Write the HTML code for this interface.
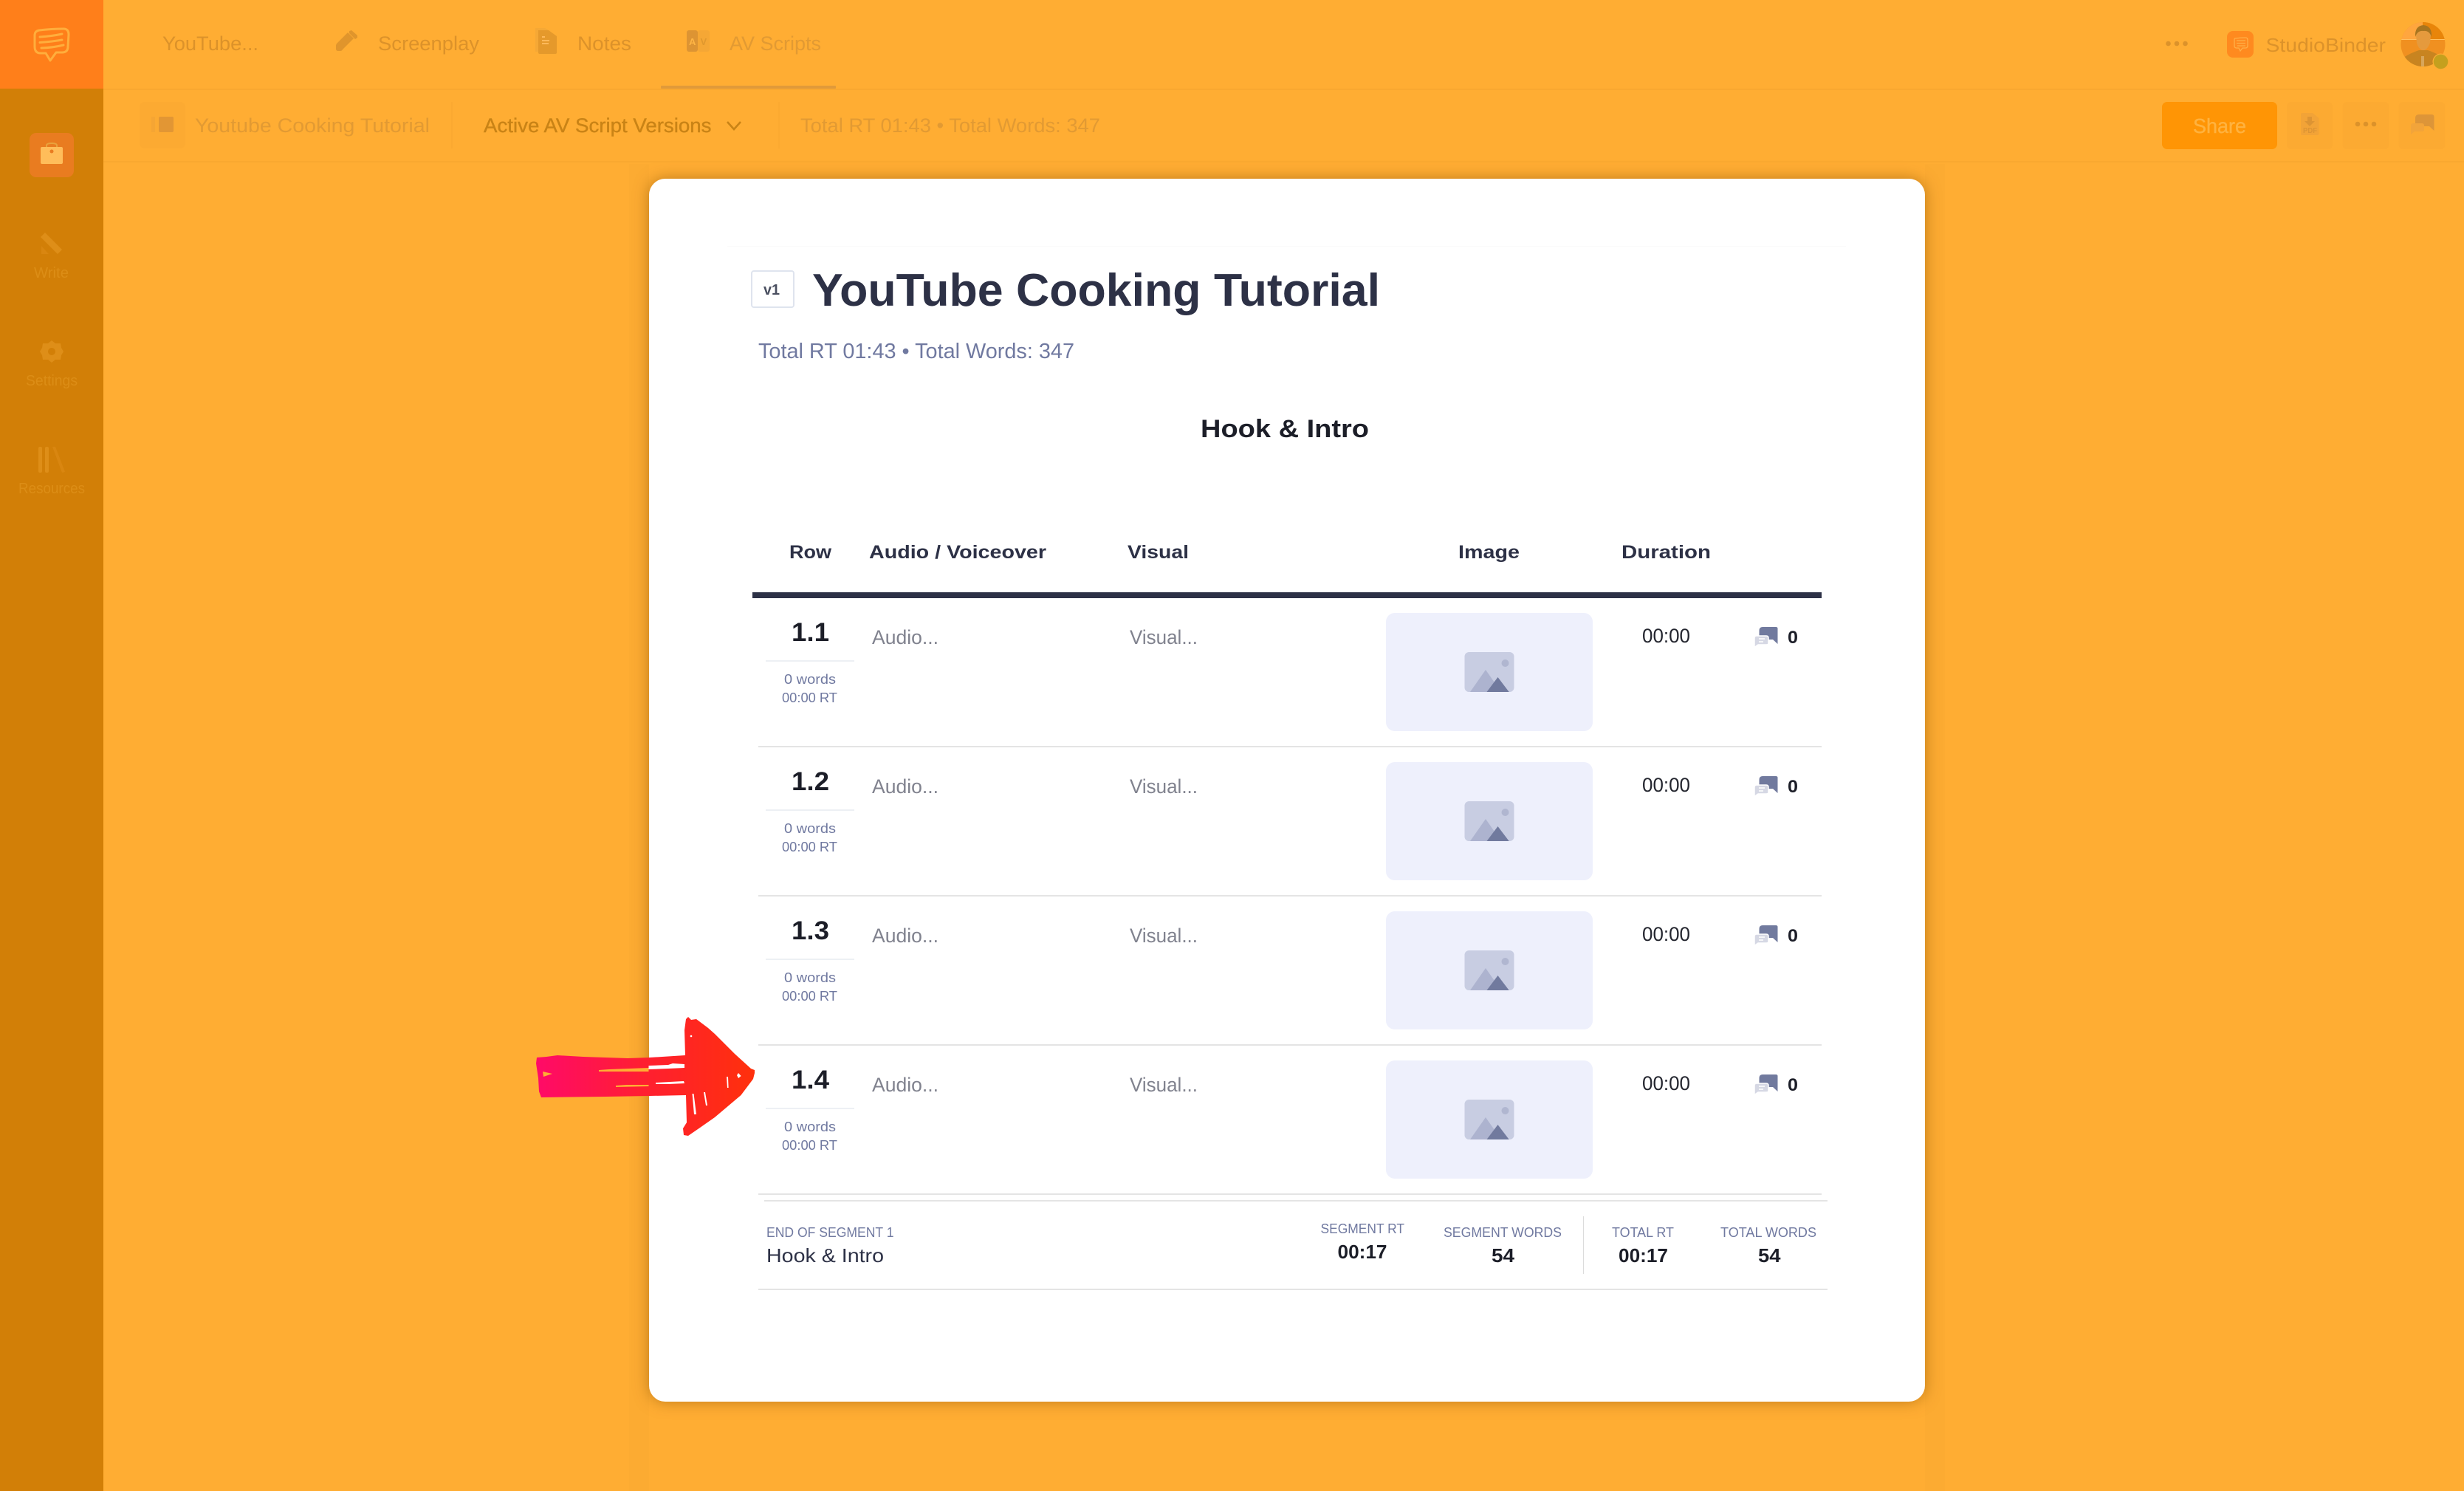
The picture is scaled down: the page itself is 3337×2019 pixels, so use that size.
<!DOCTYPE html>
<html lang="en"><head><meta charset="utf-8"><title>YouTube Cooking Tutorial</title>
<style>
html,body{margin:0;padding:0;width:3337px;height:2019px;overflow:hidden;background:#ffad33}
.side{position:absolute;left:0;top:0;width:140px;height:2019px;background:#d27f07}
.logo{position:absolute;left:0;top:0;width:140px;height:120px;background:#ff7f1a}
.strip{position:absolute;top:222px;bottom:0;left:852px;width:1782px;background:#fcab32}
.card{position:absolute;left:879px;top:242px;width:1728px;height:1656px;background:#fff;border-radius:22px;box-shadow:0 0 20px rgba(130,75,0,.5)}
.under{position:absolute;left:879px;top:222px;bottom:0;width:1728px;background:#ffad33}
svg{position:absolute;left:0;top:0}
text{font-family:"Liberation Sans",sans-serif}
</style></head><body>
<div class="side"></div><div class="logo"></div><div class="strip"></div><div class="under"></div><div class="card"></div>
<svg width="3337" height="2019" viewBox="0 0 3337 2019" xmlns="http://www.w3.org/2000/svg">
<defs>
<linearGradient id="ar" gradientUnits="userSpaceOnUse" x1="726" y1="0" x2="1021" y2="0"><stop offset="0" stop-color="#ff0a68"/><stop offset=".5" stop-color="#ff1f30"/><stop offset="1" stop-color="#ff300c"/></linearGradient>
<clipPath id="av"><circle cx="3281.5" cy="60" r="30"/></clipPath>
</defs>
<!-- header lines -->
<rect x="140" y="120" width="3197" height="2" fill="#f9a830"/>
<rect x="140" y="218" width="3197" height="2" fill="#f9a830"/>
<rect x="895" y="116" width="237" height="4" rx="1" fill="#e09a3a"/>
<!-- logo -->
<path d="M53 41 Q70 39 86 39 Q93 39 93 47 L92 63 Q92 71 84 71 L76 71 L68 82 L62 72 L55 72 Q47 72 47 63 L47 48 Q47 42 53 41Z" fill="none" stroke="#ffae3c" stroke-width="3" stroke-linejoin="round"/>
<path d="M54 50 Q70 49 84 46M54 57.500 Q70 56.500 84 54M56 65 Q72 64.500 86 61" fill="none" stroke="#ffae3c" stroke-width="3" stroke-linecap="round"/>
<!-- side nav -->
<rect x="40" y="180" width="60" height="60" rx="9" fill="#e97c20"/>
<path d="M55 201 Q55 199 57 199 H83 Q85 199 85 201 L85 220 Q85 222 83 222 H57 Q55 222 55 220Z" fill="#ffbd5a"/>
<path d="M63 199 V197 Q63 194 70 194 Q77 194 77 197 V199" fill="none" stroke="#e9a33d" stroke-width="2"/>
<circle cx="70" cy="205" r="2.500" fill="#e97c20"/>
<path d="M55 321 L61 315 L84 338 L78 344Z" fill="#de8e18"/>
<path d="M56 333 L66 344 H56Z" fill="#d98610"/>
<text x="46" y="376" font-size="20" fill="#dc8d16" textLength="47" lengthAdjust="spacingAndGlyphs">Write</text>
<path d="M70 461 L75 465 L82 465 L83 471 L86 476 L83 481 L82 487 L75 487 L70 491 L65 487 L58 487 L57 481 L54 476 L57 471 L58 465 L65 465Z" fill="#de8e18"/>
<circle cx="70" cy="476" r="5" fill="#d27f07"/>
<text x="35" y="522" font-size="20" fill="#dc8d16" textLength="70" lengthAdjust="spacingAndGlyphs">Settings</text>
<rect x="52" y="605" width="5" height="35" rx="2" fill="#de8e18"/>
<rect x="61" y="605" width="5" height="35" rx="2" fill="#de8e18"/>
<path d="M71 605 L75 605 L88 639 L84 640Z" fill="#d98610"/>
<text x="25" y="668" font-size="20" fill="#dc8d16" textLength="90" lengthAdjust="spacingAndGlyphs">Resources</text>
<!-- top nav -->
<text x="220" y="68" font-size="27" fill="#dc922a" textLength="130" lengthAdjust="spacingAndGlyphs">YouTube...</text>
<path d="M456 59 L471 44 L479 52 L464 67 Q463 69 461 69 L458 69 Q455 69 455 66 L455 61Z M473 42 L476 41 L484 48 L484 51 L481 53 L473 45Z" fill="#e0952c"/>
<text x="512" y="68" font-size="27" fill="#dc922a" textLength="137" lengthAdjust="spacingAndGlyphs">Screenplay</text>
<path d="M725 38 H738 L742 40 V70 H725Z" fill="#f5a835"/>
<path d="M729 41 H743 L754 49 V71 Q754 73 752 73 H731 Q729 73 729 71Z" fill="#e5992b"/>
<path d="M734 50 H738 M734 55 H744 M734 59 H743" stroke="#ffb95a" stroke-width="2"/>
<text x="782" y="68" font-size="27" fill="#dc922a" textLength="73" lengthAdjust="spacingAndGlyphs">Notes</text>
<rect x="930" y="41" width="15" height="29" rx="3" fill="#dd9433"/>
<rect x="945" y="41" width="16" height="29" rx="3" fill="#f5a735"/>
<text x="933" y="61" font-size="13" font-weight="bold" fill="#ffb544">A</text>
<text x="948.500" y="61" font-size="13" font-weight="bold" fill="#e0982e">V</text>
<text x="988" y="68" font-size="27" fill="#e29a33" textLength="124" lengthAdjust="spacingAndGlyphs">AV Scripts</text>
<circle cx="2936.500" cy="59" r="3.300" fill="#dc922a"/><circle cx="2948" cy="59" r="3.300" fill="#dc922a"/><circle cx="2959.500" cy="59" r="3.300" fill="#dc922a"/>
<rect x="3016" y="42" width="36" height="36" rx="8" fill="#ff8a1f"/>
<path d="M3027 52 Q3034 51 3041 51 Q3044 51 3044 54 V62 Q3044 65 3041 65 H3037 L3034 69 L3032 65 H3029 Q3026 65 3026 62 V54 Q3026 52 3027 52Z M3029 55 H3041 M3029 58.500 H3041 M3030 62 H3041" fill="none" stroke="#ffb048" stroke-width="1.300"/>
<text x="3068.500" y="70" font-size="26" fill="#dc922a" textLength="162.500" lengthAdjust="spacingAndGlyphs">StudioBinder</text>
<g clip-path="url(#av)">
<rect x="3250" y="28" width="64" height="64" fill="#f09020"/>
<path d="M3281 28 H3314 V53 H3281Z" fill="#e8850a"/>
<path d="M3250 28 H3281 V53 H3250Z" fill="#ffa63e"/>
<rect x="3251" y="53" width="62" height="1" fill="#ffc062"/>
<path d="M3255 92 V78 Q3264 72 3276 68 H3288 Q3300 72 3308 78 V92Z" fill="#c88420"/>
<path d="M3272 48 Q3272 36 3282 35 Q3293 36 3292 48 L3291 58 Q3287 68 3282 68 Q3276 68 3273 58Z" fill="#e59a3d"/>
<path d="M3271 50 Q3270 35 3282 34 Q3294 35 3293 50 Q3290 41 3282 42 Q3274 41 3271 50Z" fill="#a8751f"/>
<rect x="3279" y="76" width="4" height="16" fill="#d9a65a"/>
</g>
<circle cx="3305.500" cy="83.500" r="11" fill="#ffad33"/><circle cx="3305.500" cy="83.500" r="9.800" fill="#c4a01e"/>
<!-- sub header -->
<rect x="189" y="138" width="62" height="63" rx="7" fill="#fcaa32"/>
<rect x="205" y="158" width="5" height="21" fill="#f5a534"/>
<rect x="215" y="158" width="20" height="21" rx="2" fill="#e29634"/>
<text x="264" y="179" font-size="27" fill="#e29a33" textLength="318" lengthAdjust="spacingAndGlyphs">Youtube Cooking Tutorial</text>
<rect x="611" y="138" width="2" height="63" fill="#fba931"/>
<text x="655" y="179" font-size="27" fill="#c98316" stroke="#c98316" stroke-width=".4" textLength="308.500" lengthAdjust="spacingAndGlyphs">Active AV Script Versions</text>
<path d="M985 165 L994 175 L1003 165" fill="none" stroke="#c98316" stroke-width="2.600"/>
<rect x="1054" y="138" width="2" height="63" fill="#fba931"/>
<text x="1084" y="179" font-size="27" fill="#e29a33" textLength="406" lengthAdjust="spacingAndGlyphs">Total RT 01:43 • Total Words: 347</text>
<rect x="2928" y="138" width="156" height="64" rx="7" fill="#ff9505"/>
<text x="2970" y="180" font-size="28" fill="#ffb23f" stroke="#ffb23f" stroke-width=".4" textLength="72" lengthAdjust="spacingAndGlyphs">Share</text>
<rect x="3097" y="138" width="62" height="64" rx="6" fill="#fcaa32"/>
<rect x="3172.500" y="138" width="63" height="64" rx="6" fill="#fcaa32"/>
<rect x="3248.500" y="138" width="63" height="64" rx="6" fill="#fcaa32"/>
<path d="M3116 155 Q3116 153 3118 153 H3132 L3140.500 160 V181 Q3140.500 183 3138 183 H3118 Q3116 183 3116 181Z" fill="#f2a337"/>
<path d="M3125 158 H3131 V164 H3135 L3128 171 L3121 164 H3125Z" fill="#dd9433"/>
<text x="3119" y="180" font-size="10" font-weight="bold" fill="#dd9433" textLength="19" lengthAdjust="spacingAndGlyphs">PDF</text>
<circle cx="3193" cy="168" r="3.300" fill="#dc922a"/><circle cx="3204" cy="168" r="3.300" fill="#dc922a"/><circle cx="3215" cy="168" r="3.300" fill="#dc922a"/>
<path d="M3271 160 Q3271 155 3276 155 H3293 Q3296.500 155 3296.500 158 V177 L3290 171 H3271Z" fill="#dd9538"/>
<path d="M3265 170 Q3265 167 3268 167 H3280 Q3283 167 3283 170 V176 Q3283 178 3280 178 H3270 L3265 182Z" fill="#f2a43a"/>
<!-- card contents -->
<rect x="985" y="333" width="1515" height="1" fill="#fafafa"/>
<rect x="1018" y="367" width="57" height="49" rx="3" fill="#fff" stroke="#dfe4ee" stroke-width="2"/>
<text x="1034" y="399" font-size="20" font-weight="bold" fill="#4a4f60" textLength="22" lengthAdjust="spacingAndGlyphs">v1</text>
<text x="1100" y="414" font-size="62" font-weight="bold" fill="#2d3146" textLength="769" lengthAdjust="spacingAndGlyphs">YouTube Cooking Tutorial</text>
<text x="1027" y="485" font-size="29" fill="#7079a0" textLength="428" lengthAdjust="spacingAndGlyphs">Total RT 01:43 • Total Words: 347</text>
<text x="1626" y="592" font-size="34" font-weight="bold" fill="#1c1e28" textLength="228" lengthAdjust="spacingAndGlyphs">Hook &amp; Intro</text>
<g font-size="25" font-weight="bold" fill="#2d3146">
<text x="1069" y="756" textLength="57" lengthAdjust="spacingAndGlyphs">Row</text>
<text x="1177" y="756" textLength="240" lengthAdjust="spacingAndGlyphs">Audio / Voiceover</text>
<text x="1527" y="756" textLength="83" lengthAdjust="spacingAndGlyphs">Visual</text>
<text x="1975" y="756" textLength="83" lengthAdjust="spacingAndGlyphs">Image</text>
<text x="2196" y="756" textLength="121" lengthAdjust="spacingAndGlyphs">Duration</text>
</g>
<rect x="1019" y="802" width="1448" height="8" fill="#2d3146"/>

<g>
<text x="1072" y="868" font-size="35" font-weight="bold" fill="#1c1e28" textLength="51" lengthAdjust="spacingAndGlyphs">1.1</text>
<rect x="1037" y="894" width="120" height="2" fill="#edf0f4"/>
<text x="1062" y="926" font-size="18" fill="#7079a0" textLength="70" lengthAdjust="spacingAndGlyphs">0 words</text>
<text x="1059" y="951" font-size="18" fill="#7079a0" textLength="75" lengthAdjust="spacingAndGlyphs">00:00 RT</text>
<text x="1181" y="872" font-size="27" fill="#80828e" textLength="90" lengthAdjust="spacingAndGlyphs">Audio...</text>
<text x="1530" y="872" font-size="27" fill="#80828e" textLength="92" lengthAdjust="spacingAndGlyphs">Visual...</text>
<rect x="1877" y="830" width="280" height="160" rx="12" fill="#eef0fc"/>
<rect x="1983.500" y="883" width="67" height="54" rx="6" fill="#c8cde2"/>
<ellipse cx="2038.500" cy="898" rx="5" ry="5" fill="#b0b6d0"/>
<path d="M1991 937 L2012 907 L2033 937Z" fill="#adb3cf"/>
<path d="M2013.500 937 L2028.500 917 L2043.700 937Z" fill="#717a9e"/>
<text x="2224" y="870" font-size="27" fill="#24262f" textLength="65" lengthAdjust="spacingAndGlyphs">00:00</text>
<path d="M2382.500 854 Q2382.500 849 2387 849 H2405 Q2407.500 849 2407.500 851 V872 L2401 866 H2382.500Z" fill="#717a9e"/>
<path d="M2376 864 Q2376 861 2379 861 H2392 Q2395 861 2395 864 V871 Q2395 873 2392 873 H2381 L2376 876.500Z" fill="#d6d8e4" stroke="#fff" stroke-width="1.500"/>
<path d="M2382 865 H2390 M2382 869 H2388" stroke="#fff" stroke-width="1.500"/>
<text x="2421" y="871" font-size="24" font-weight="bold" fill="#1c1e28" textLength="14" lengthAdjust="spacingAndGlyphs">0</text>
<rect x="1027" y="1010" width="1440" height="2" fill="#e4e4e4"/>
</g>
<g transform="translate(0,202)">
<text x="1072" y="868" font-size="35" font-weight="bold" fill="#1c1e28" textLength="51" lengthAdjust="spacingAndGlyphs">1.2</text>
<rect x="1037" y="894" width="120" height="2" fill="#edf0f4"/>
<text x="1062" y="926" font-size="18" fill="#7079a0" textLength="70" lengthAdjust="spacingAndGlyphs">0 words</text>
<text x="1059" y="951" font-size="18" fill="#7079a0" textLength="75" lengthAdjust="spacingAndGlyphs">00:00 RT</text>
<text x="1181" y="872" font-size="27" fill="#80828e" textLength="90" lengthAdjust="spacingAndGlyphs">Audio...</text>
<text x="1530" y="872" font-size="27" fill="#80828e" textLength="92" lengthAdjust="spacingAndGlyphs">Visual...</text>
<rect x="1877" y="830" width="280" height="160" rx="12" fill="#eef0fc"/>
<rect x="1983.500" y="883" width="67" height="54" rx="6" fill="#c8cde2"/>
<ellipse cx="2038.500" cy="898" rx="5" ry="5" fill="#b0b6d0"/>
<path d="M1991 937 L2012 907 L2033 937Z" fill="#adb3cf"/>
<path d="M2013.500 937 L2028.500 917 L2043.700 937Z" fill="#717a9e"/>
<text x="2224" y="870" font-size="27" fill="#24262f" textLength="65" lengthAdjust="spacingAndGlyphs">00:00</text>
<path d="M2382.500 854 Q2382.500 849 2387 849 H2405 Q2407.500 849 2407.500 851 V872 L2401 866 H2382.500Z" fill="#717a9e"/>
<path d="M2376 864 Q2376 861 2379 861 H2392 Q2395 861 2395 864 V871 Q2395 873 2392 873 H2381 L2376 876.500Z" fill="#d6d8e4" stroke="#fff" stroke-width="1.500"/>
<path d="M2382 865 H2390 M2382 869 H2388" stroke="#fff" stroke-width="1.500"/>
<text x="2421" y="871" font-size="24" font-weight="bold" fill="#1c1e28" textLength="14" lengthAdjust="spacingAndGlyphs">0</text>
<rect x="1027" y="1010" width="1440" height="2" fill="#e4e4e4"/>
</g>
<g transform="translate(0,404)">
<text x="1072" y="868" font-size="35" font-weight="bold" fill="#1c1e28" textLength="51" lengthAdjust="spacingAndGlyphs">1.3</text>
<rect x="1037" y="894" width="120" height="2" fill="#edf0f4"/>
<text x="1062" y="926" font-size="18" fill="#7079a0" textLength="70" lengthAdjust="spacingAndGlyphs">0 words</text>
<text x="1059" y="951" font-size="18" fill="#7079a0" textLength="75" lengthAdjust="spacingAndGlyphs">00:00 RT</text>
<text x="1181" y="872" font-size="27" fill="#80828e" textLength="90" lengthAdjust="spacingAndGlyphs">Audio...</text>
<text x="1530" y="872" font-size="27" fill="#80828e" textLength="92" lengthAdjust="spacingAndGlyphs">Visual...</text>
<rect x="1877" y="830" width="280" height="160" rx="12" fill="#eef0fc"/>
<rect x="1983.500" y="883" width="67" height="54" rx="6" fill="#c8cde2"/>
<ellipse cx="2038.500" cy="898" rx="5" ry="5" fill="#b0b6d0"/>
<path d="M1991 937 L2012 907 L2033 937Z" fill="#adb3cf"/>
<path d="M2013.500 937 L2028.500 917 L2043.700 937Z" fill="#717a9e"/>
<text x="2224" y="870" font-size="27" fill="#24262f" textLength="65" lengthAdjust="spacingAndGlyphs">00:00</text>
<path d="M2382.500 854 Q2382.500 849 2387 849 H2405 Q2407.500 849 2407.500 851 V872 L2401 866 H2382.500Z" fill="#717a9e"/>
<path d="M2376 864 Q2376 861 2379 861 H2392 Q2395 861 2395 864 V871 Q2395 873 2392 873 H2381 L2376 876.500Z" fill="#d6d8e4" stroke="#fff" stroke-width="1.500"/>
<path d="M2382 865 H2390 M2382 869 H2388" stroke="#fff" stroke-width="1.500"/>
<text x="2421" y="871" font-size="24" font-weight="bold" fill="#1c1e28" textLength="14" lengthAdjust="spacingAndGlyphs">0</text>
<rect x="1027" y="1010" width="1440" height="2" fill="#e4e4e4"/>
</g>
<g transform="translate(0,606)">
<text x="1072" y="868" font-size="35" font-weight="bold" fill="#1c1e28" textLength="51" lengthAdjust="spacingAndGlyphs">1.4</text>
<rect x="1037" y="894" width="120" height="2" fill="#edf0f4"/>
<text x="1062" y="926" font-size="18" fill="#7079a0" textLength="70" lengthAdjust="spacingAndGlyphs">0 words</text>
<text x="1059" y="951" font-size="18" fill="#7079a0" textLength="75" lengthAdjust="spacingAndGlyphs">00:00 RT</text>
<text x="1181" y="872" font-size="27" fill="#80828e" textLength="90" lengthAdjust="spacingAndGlyphs">Audio...</text>
<text x="1530" y="872" font-size="27" fill="#80828e" textLength="92" lengthAdjust="spacingAndGlyphs">Visual...</text>
<rect x="1877" y="830" width="280" height="160" rx="12" fill="#eef0fc"/>
<rect x="1983.500" y="883" width="67" height="54" rx="6" fill="#c8cde2"/>
<ellipse cx="2038.500" cy="898" rx="5" ry="5" fill="#b0b6d0"/>
<path d="M1991 937 L2012 907 L2033 937Z" fill="#adb3cf"/>
<path d="M2013.500 937 L2028.500 917 L2043.700 937Z" fill="#717a9e"/>
<text x="2224" y="870" font-size="27" fill="#24262f" textLength="65" lengthAdjust="spacingAndGlyphs">00:00</text>
<path d="M2382.500 854 Q2382.500 849 2387 849 H2405 Q2407.500 849 2407.500 851 V872 L2401 866 H2382.500Z" fill="#717a9e"/>
<path d="M2376 864 Q2376 861 2379 861 H2392 Q2395 861 2395 864 V871 Q2395 873 2392 873 H2381 L2376 876.500Z" fill="#d6d8e4" stroke="#fff" stroke-width="1.500"/>
<path d="M2382 865 H2390 M2382 869 H2388" stroke="#fff" stroke-width="1.500"/>
<text x="2421" y="871" font-size="24" font-weight="bold" fill="#1c1e28" textLength="14" lengthAdjust="spacingAndGlyphs">0</text>
<rect x="1027" y="1010" width="1440" height="2" fill="#e4e4e4"/>
</g>
<!-- footer -->
<rect x="1035" y="1625" width="1440" height="2" fill="#e4e4e4"/>
<rect x="1027" y="1745" width="1448" height="2" fill="#e4e4e4"/>
<rect x="2144" y="1647" width="1" height="78" fill="#dcdcdc"/>
<g font-size="18" fill="#7079a0">
<text x="1038" y="1675" textLength="172.500" lengthAdjust="spacingAndGlyphs">END OF SEGMENT 1</text>
<text x="1788.500" y="1670" textLength="113.500" lengthAdjust="spacingAndGlyphs">SEGMENT RT</text>
<text x="1955" y="1675" textLength="160" lengthAdjust="spacingAndGlyphs">SEGMENT WORDS</text>
<text x="2183" y="1675" textLength="84" lengthAdjust="spacingAndGlyphs">TOTAL RT</text>
<text x="2330" y="1675" textLength="130" lengthAdjust="spacingAndGlyphs">TOTAL WORDS</text>
</g>
<text x="1038" y="1709" font-size="26" fill="#2d3146" textLength="159" lengthAdjust="spacingAndGlyphs">Hook &amp; Intro</text>
<g font-size="26" font-weight="bold" fill="#1c1e28">
<text x="1811.500" y="1704" textLength="67" lengthAdjust="spacingAndGlyphs">00:17</text>
<text x="2020" y="1709" textLength="31" lengthAdjust="spacingAndGlyphs">54</text>
<text x="2192" y="1709" textLength="67" lengthAdjust="spacingAndGlyphs">00:17</text>
<text x="2381" y="1709" textLength="30.500" lengthAdjust="spacingAndGlyphs">54</text>
</g>
<!-- arrow -->
<path d="M727 1432 L740 1431 L755 1429 L790 1431 L850 1433 L880 1432 L928 1429 L927 1395 L929 1380 L932 1377 L936 1381 L943 1380 L959 1392 L968 1400 L995 1427 L1017 1447 L1022 1449 L1022 1453 L1020 1461 L1003.500 1483 L968 1513 L948 1527 L932 1538 L926 1537 L925 1528 L930 1520 L929 1483 L880 1484 L820 1485 L733 1486 L730 1478 L729 1460 L726 1440Z" fill="url(#ar)"/>
<path d="M878.500 1443 L905 1442 L911 1440 L927 1441 L927 1446 L905 1447 L878.500 1448Z M888 1466 L926 1464 L927 1467 L905 1468 L888 1468Z M937.500 1481 L939.500 1481 L943 1509 L940 1509Z M953 1479 L955 1479 L958 1497 L956 1497Z M984 1458 L986 1458 L986.600 1473 L985 1473Z M1000 1453 L1003.600 1457 L1000 1460 L998 1456Z" fill="#fff"/>
<circle cx="936" cy="1403" r="1.300" fill="#fff"/>
<path d="M811 1449 L825 1448 L878.500 1446 L878.500 1451 L840 1451 L811 1451Z M834 1470 L848 1469 L878.500 1469 L878.500 1471 L834 1472Z M735 1451 L748 1454 L736 1458Z" fill="#ffad33"/>
</svg>
</body></html>
